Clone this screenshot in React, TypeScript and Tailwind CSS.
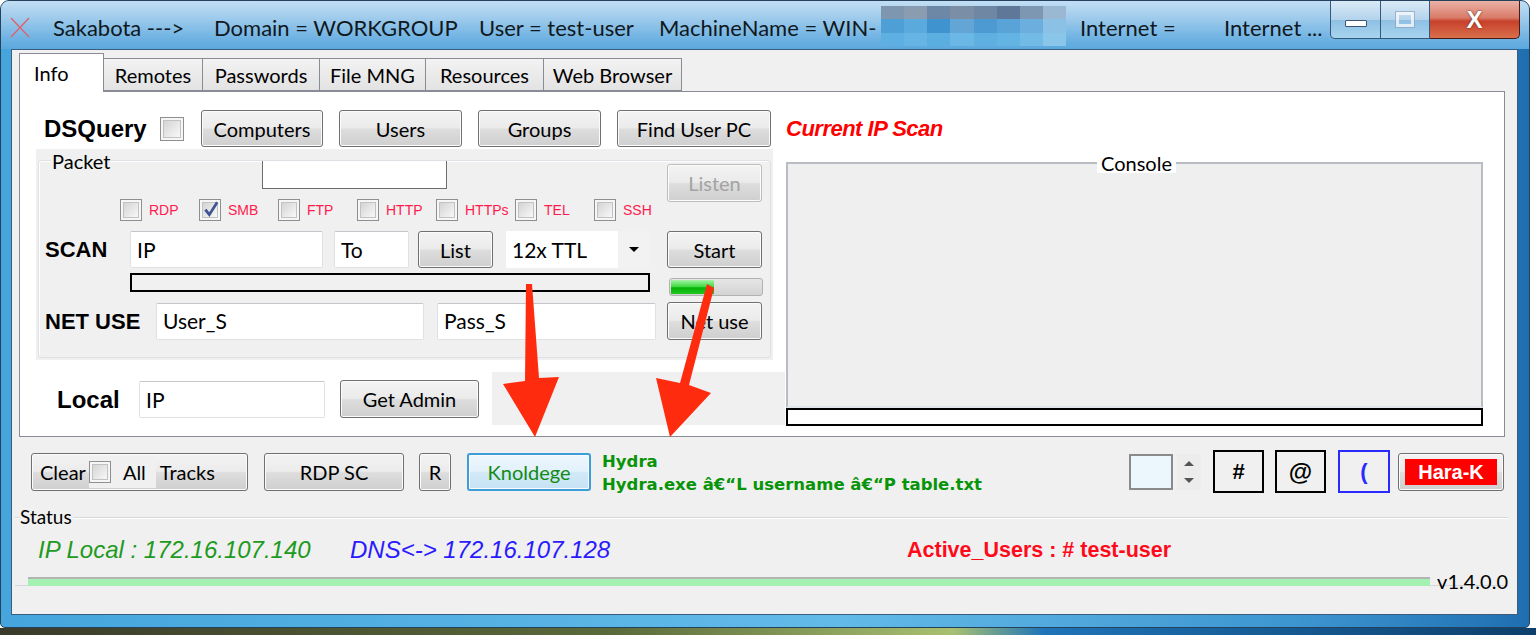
import React from "react";

const Btn = ({
  children,
  className = "",
}: {
  children: React.ReactNode;
  className?: string;
}) => (
  <div
    className={`flex items-center justify-center rounded-[3px] border border-[#707070] bg-[linear-gradient(to_bottom,#f3f3f3_0%,#ebebeb_48%,#dddddd_52%,#cfcfcf_100%)] shadow-[inset_0_0_0_1px_#fbfbfb] text-[20px] text-black ${className}`}
  >
    {children}
  </div>
);

const TextBox = ({ value = "", className = "" }: { value?: string; className?: string }) => (
  <div
    className={`flex items-center bg-white border border-[#dfe1e5] border-t-[#c3c5cb] rounded-[2px] px-[6px] text-[21px] text-black ${className}`}
  >
    {value}
  </div>
);

const Check = ({ checked = false, className = "" }: { checked?: boolean; className?: string }) => (
  <div className={`w-[22px] h-[22px] shrink-0 border border-[#8f8f8f] bg-[#f6f6f6] p-[2px] ${className}`}>
    <div className="relative w-full h-full border border-[#c2c2c2] bg-[linear-gradient(135deg,#d4d4d4,#f8f8f8)]">
      {checked && (
        <svg viewBox="0 0 16 16" className="absolute -left-px -top-[3px] w-[18px] h-[18px]">
          <path d="M3 8.5 L6.5 13 L13.5 2" fill="none" stroke="#3d5393" strokeWidth="2.4" />
        </svg>
      )}
    </div>
  </div>
);

const Proto = ({ label, checked = false }: { label: string; checked?: boolean }) => (
  <div className="flex items-center w-[79px] shrink-0">
    <Check checked={checked} />
    <span className="ml-[7px] text-[14px] text-[#ff1a4d] font-['Liberation_Sans',Arial,sans-serif]">
      {label}
    </span>
  </div>
);

const blurColors = [
  "#7f97ae", "#8a9cb0", "#6c88a6", "#7a8ea6", "#6f87a3", "#5f7799", "#7d97b2", "#9bb8d2",
  "#4e9fd6", "#5aaadd", "#3f93cf", "#63a6d6", "#4d9ad2", "#5aa3d8", "#6caedd", "#8cc1e6",
  "#5fb0e2", "#66b4e4", "#5aaee0", "#6bb7e5", "#5fb0e1", "#63b3e3", "#72bbe6", "#8ac6ea",
];

const Tab = ({ label, className = "" }: { label: string; className?: string }) => (
  <div
    className={`h-[33px] flex items-center justify-center border border-[#898c95] border-l-0 bg-[linear-gradient(to_bottom,#f2f2f2,#e3e3e3)] text-[20px] ${className}`}
  >
    {label}
  </div>
);

export default function App() {
  return (
    <div className="relative w-[1536px] h-[635px] overflow-hidden bg-white font-['Lato',sans-serif] text-black">
      {/* window */}
      <div className="w-[1530px] h-[628px] flex flex-col rounded-t-[9px] rounded-b-[5px] border border-[#24415e] bg-[linear-gradient(to_right,#45a5dc,#62bae8_55%,#3d95d0_85%,#1f6fb0)]">
        {/* title bar */}
        <div className="h-[48px] flex items-start rounded-t-[8px] bg-[linear-gradient(to_bottom,#c2def3_0%,#9fcbec_35%,#72b4e3_75%,#5aa8de_100%)]">
          <svg viewBox="0 0 24 24" className="w-[24px] h-[24px] ml-[7px] mt-[14px] shrink-0">
            <path d="M3 3 L21 22 M21 3 L3 22" stroke="#e0606a" strokeWidth="1.3" fill="none" />
          </svg>
          <div className="flex items-center ml-[21px] mt-[11px] h-[30px] text-[22px] text-[#101820] whitespace-nowrap">
            <span className="w-[161px]">Sakabota ---&gt;</span>
            <span className="w-[265px]">Domain = WORKGROUP</span>
            <span className="w-[180px]">User = test-user</span>
            <span className="w-[222px]">MachineName = WIN-</span>
            <div className="w-[185px] h-[40px] -mt-[2px] grid grid-cols-8 grid-rows-3">
              {blurColors.map((c, i) => (
                <div key={i} style={{ backgroundColor: c }} />
              ))}
            </div>
            <span className="w-[144px] ml-[14px]">Internet =</span>
            <span>Internet ...</span>
          </div>
          <div className="ml-auto mr-[9px] flex h-[38px]">
            <div className="w-[51px] h-full flex items-center justify-center rounded-bl-[5px] border border-t-0 border-[#34587a] bg-[linear-gradient(to_bottom,#dbeaf6,#b3d3ec_50%,#8fc0e3_52%,#a7d4ef)]">
              <div className="w-[22px] h-[7px] mt-[8px] bg-white border border-[#3b5570] rounded-[1px]" />
            </div>
            <div className="w-[49px] h-full flex items-center justify-center border border-l-0 border-t-0 border-[#34587a] bg-[linear-gradient(to_bottom,#dbeaf6,#b3d3ec_50%,#8fc0e3_52%,#a7d4ef)]">
              <div className="w-[18px] h-[15px] border-[3px] border-white outline outline-1 outline-[#8aa3bb] opacity-70" />
            </div>
            <div className="w-[90px] h-full flex items-center justify-center rounded-br-[5px] border border-l-0 border-t-0 border-[#4a1a14] bg-[linear-gradient(to_bottom,#eab2a6,#d97b69_45%,#c8412b_55%,#d8704c)]">
              <span className="text-white text-[24px] font-bold font-['Liberation_Sans',Arial,sans-serif] [text-shadow:0_0_2px_#5a1a10]">
                X
              </span>
            </div>
          </div>
        </div>

        {/* client */}
        <div className="flex-1 ml-[10px] mr-[11px] mb-[12px] border border-[#3a5d7f] bg-[#f0f0f0] flex flex-col">
          {/* tab control */}
          <div className="ml-[7px] mt-[3px] w-[1486px] flex flex-col">
            <div className="h-[38px] flex items-end">
              <div className="relative z-10 -mb-px h-[39px] w-[85px] flex items-center pl-[14px] border border-b-0 border-[#898c95] bg-white text-[20px]">
                Info
              </div>
              <Tab label="Remotes" className="w-[99px]" />
              <Tab label="Passwords" className="w-[117px]" />
              <Tab label="File MNG" className="w-[106px]" />
              <Tab label="Resources" className="w-[118px]" />
              <Tab label="Web Browser" className="w-[138px]" />
            </div>

            {/* tab page */}
            <div className="h-[346px] border border-[#898c95] bg-white flex pl-[16px] pt-[18px]">
              {/* left column */}
              <div className="w-[750px] flex flex-col">
                <div className="h-[37px] flex items-center">
                  <span className="ml-[8px] w-[104px] text-[24px] font-bold font-['Liberation_Sans',Arial,sans-serif]">
                    DSQuery
                  </span>
                  <Check className="ml-[12px] !w-[24px] !h-[24px]" />
                  <Btn className="ml-[17px] w-[122px] h-[37px]">Computers</Btn>
                  <Btn className="ml-[16px] w-[123px] h-[37px]">Users</Btn>
                  <Btn className="ml-[16px] w-[123px] h-[37px]">Groups</Btn>
                  <Btn className="ml-[16px] w-[154px] h-[37px]">Find User PC</Btn>
                </div>

                {/* Packet */}
                <div className="mt-[2px] w-[737px] h-[212px] bg-[#f0f0f0] flex flex-col px-[2px] pb-[2px] pt-[2px]">
                  <span className="relative z-10 self-start ml-[13px] px-[1px] h-[20px] leading-[20px] text-[20px] bg-[#f0f0f0]">
                    Packet
                  </span>
                  <div className="-mt-[11px] flex-1 rounded-[3px] border border-[#dde1e5] shadow-[inset_1px_1px_0_#ffffff] flex flex-col">
                    <div className="h-[37px] flex items-start">
                      <div className="ml-[223px] w-[185px] h-[28px] bg-white border border-t-0 border-[#6d6d6d]" />
                      <Btn className="ml-auto mr-[8px] mt-[3px] w-[95px] h-[38px] !text-[#a3a3a3] !border-[#bdbdbd] !bg-[#f4f4f4]">
                        Listen
                      </Btn>
                    </div>
                    <div className="h-[24px] flex items-center pl-[81px]">
                      <Proto label="RDP" />
                      <Proto label="SMB" checked />
                      <Proto label="FTP" />
                      <Proto label="HTTP" />
                      <Proto label="HTTPs" />
                      <Proto label="TEL" />
                      <Proto label="SSH" />
                    </div>
                    <div className="mt-[9px] h-[37px] flex items-center">
                      <span className="w-[91px] pl-[6px] text-[22px] font-bold font-['Liberation_Sans',Arial,sans-serif]">
                        SCAN
                      </span>
                      <TextBox value="IP" className="w-[193px] h-[37px]" />
                      <TextBox value="To" className="ml-[11px] w-[75px] h-[37px]" />
                      <Btn className="ml-[9px] w-[75px] h-[37px]">List</Btn>
                      <div className="ml-[13px] w-[143px] h-[37px] flex bg-white">
                        <span className="flex-1 flex items-center pl-[6px] text-[21px]">12x TTL</span>
                        <div className="w-[31px] flex items-center justify-center bg-[#f2f2f2]">
                          <div className="w-0 h-0 border-l-[5px] border-r-[5px] border-t-[5px] border-l-transparent border-r-transparent border-t-black" />
                        </div>
                      </div>
                      <Btn className="ml-[18px] w-[95px] h-[37px]">Start</Btn>
                    </div>
                    <div className="mt-[5px] h-[23px] flex items-start">
                      <div className="ml-[91px] w-[520px] h-[19px] border-2 border-black bg-[#f0f0f0]" />
                      <div className="ml-[19px] mt-[5px] w-[94px] h-[18px] rounded-[3px] border border-[#b2b2b2] bg-[linear-gradient(to_bottom,#e6e6e6,#d3d3d3)] p-[1px]">
                        <div className="w-[48%] h-full bg-[linear-gradient(to_bottom,#a6f2a6,#3dd93d_50%,#06b006_55%,#1fc81f)]" />
                      </div>
                    </div>
                    <div className="mt-[6px] h-[38px] flex items-center">
                      <span className="w-[117px] pl-[6px] text-[22px] font-bold font-['Liberation_Sans',Arial,sans-serif]">
                        NET USE
                      </span>
                      <TextBox value="User_S" className="w-[268px] h-[37px]" />
                      <TextBox value="Pass_S" className="ml-[13px] w-[219px] h-[37px]" />
                      <Btn className="ml-[11px] w-[95px] h-[38px]">Net use</Btn>
                    </div>
                  </div>
                </div>

                {/* Local row */}
                <div className="h-[76px] flex items-start">
                  <div className="mt-[21px] h-[37px] flex items-center">
                    <span className="w-[103px] pl-[21px] text-[24px] font-bold font-['Liberation_Sans',Arial,sans-serif]">
                      Local
                    </span>
                    <TextBox value="IP" className="w-[186px] h-[37px]" />
                  </div>
                  <Btn className="ml-[15px] mt-[20px] w-[139px] h-[38px]">Get Admin</Btn>
                  <div className="ml-[13px] mt-[12px] w-[293px] h-[53px] bg-[#f0f0f0]" />
                </div>
              </div>

              {/* right column */}
              <div className="w-[697px] flex flex-col">
                <div className="h-[37px] flex items-center">
                  <span className="text-[22px] font-bold italic text-[#ff0000] font-['Liberation_Sans',Arial,sans-serif] tracking-[-0.5px]">
                    Current IP Scan
                  </span>
                </div>
                <span className="relative z-10 mt-[6px] self-center ml-[4px] px-[4px] h-[20px] leading-[20px] text-[20px] bg-white">
                  Console
                </span>
                <div className="-mt-[11px] h-[246px] border-2 border-[#b9bcc2] border-b-[#e3e6ea] bg-[#efefef]" />
                <div className="h-[18px] border-2 border-black bg-white" />
              </div>
            </div>
          </div>

          {/* bottom button row */}
          <div className="mt-[13px] h-[43px] flex items-center pl-[19px] pr-[13px]">
            <Btn className="w-[217px] h-[38px] !justify-start pl-[8px]">
              <span>Clear</span>
              <div className="ml-[3px] h-[32px] flex items-center bg-[#f0f0f0] pr-[10px]">
                <Check />
                <span className="ml-[12px]">All</span>
              </div>
              <span className="ml-[4px]">Tracks</span>
            </Btn>
            <Btn className="ml-[16px] w-[140px] h-[38px]">RDP SC</Btn>
            <Btn className="ml-[15px] w-[32px] h-[38px]">R</Btn>
            <Btn className="ml-[16px] w-[124px] h-[38px] !border-2 !border-[#3c9ed8] !bg-[linear-gradient(to_bottom,#eef7fd,#e2f1fb_48%,#d2e9f7_52%,#c6e3f5)] !text-[#138a13]">
              Knoldege
            </Btn>
            <div className="ml-[11px] mt-[3px] flex flex-col text-[16.5px] leading-[23px] font-bold text-[#089408] font-['DejaVu_Sans',sans-serif]">
              <span>Hydra</span>
              <span>Hydra.exe {"\u00e2\u20ac\u201c"}L username {"\u00e2\u20ac\u201c"}P table.txt</span>
            </div>
            <div className="ml-auto flex items-center">
              <div className="w-[44px] h-[36px] border-2 border-[#8a8a8a] bg-[#ecf6fd]" />
              <div className="ml-[4px] w-[24px] h-[36px] flex flex-col items-center justify-center gap-[12px] bg-[#ececec]">
                <div className="w-0 h-0 border-l-[5px] border-r-[5px] border-b-[5px] border-l-transparent border-r-transparent border-b-[#555]" />
                <div className="w-0 h-0 border-l-[5px] border-r-[5px] border-t-[5px] border-l-transparent border-r-transparent border-t-[#555]" />
              </div>
              <div className="ml-[12px] w-[51px] h-[43px] flex items-center justify-center border-2 border-black text-[22px] font-bold font-['Liberation_Sans',Arial,sans-serif]">
                #
              </div>
              <div className="ml-[11px] w-[51px] h-[43px] flex items-center justify-center border-2 border-black text-[24px] font-bold font-['Liberation_Sans',Arial,sans-serif]">
                @
              </div>
              <div className="ml-[12px] w-[52px] h-[43px] flex items-center justify-center border-2 border-[#2a2aff] text-[#2a2aff] text-[22px] font-bold font-['Liberation_Sans',Arial,sans-serif]">
                (
              </div>
              <Btn className="ml-[8px] w-[106px] h-[38px] px-[6px] py-[5px]">
                <div className="w-full h-full flex items-center justify-center bg-[#ff0000] text-white font-bold text-[20px] font-['Liberation_Sans',Arial,sans-serif]">
                  Hara-K
                </div>
              </Btn>
            </div>
          </div>

          {/* Status */}
          <div className="mt-[14px] flex flex-col">
            <span className="relative z-10 self-start ml-[7px] px-[1px] h-[20px] leading-[20px] text-[19px] bg-[#f0f0f0]">
              Status
            </span>
            <div className="-mt-[10px] ml-[3px] mr-[9px] h-[69px] border-t border-b border-[#d3d8dd] shadow-[inset_0_1px_0_#ffffff] flex flex-col">
              <div className="mt-[19px] h-[26px] flex items-center pl-[23px] italic text-[24px] font-['Liberation_Sans',Arial,sans-serif] whitespace-nowrap">
                <span className="w-[312px] text-[#1e9a1e]">IP Local : 172.16.107.140</span>
                <span className="w-[557px] text-[#2a1aff]">DNS&lt;-&gt; 172.16.107.128</span>
                <span className="not-italic font-bold text-[21.5px] text-[#ff0a1a]">Active_Users : # test-user</span>
              </div>
              <div className="mt-[7px] h-[22px] flex items-center">
                <div className="ml-[13px] w-[1405px] h-[9px] border-t-2 border-[#b4b4b4] bg-[#a4f1b1]" />
                <span className="ml-[7px] text-[20px]">v1.4.0.0</span>
              </div>
            </div>
          </div>
        </div>
      </div>

      {/* desktop strip under the window */}
      <div className="h-[7px] bg-[linear-gradient(to_right,#3a3a2a,#5a6a3a_40%,#a9c070_62%,#1e74b8_68%,#0d3f6a)]" />

      {/* annotation arrows */}
      <svg viewBox="0 0 1536 635" className="absolute inset-0 w-[1536px] h-[635px] pointer-events-none">
        <polygon points="526,284 532,284 539,378 559,377 535,437 503,384 525,381" fill="#ff2b0e" />
        <polygon points="707,284 714,288 689,385 711,393 670,437 656,378 680,383" fill="#ff2b0e" />
      </svg>
    </div>
  );
}
